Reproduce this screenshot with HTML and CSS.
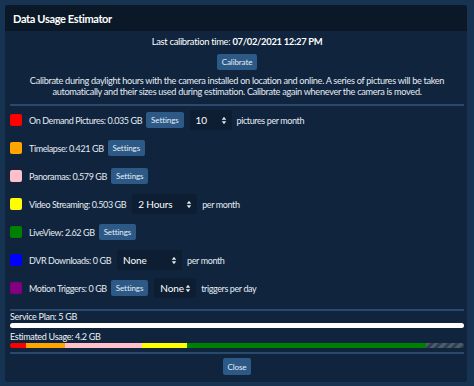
FILE: index.html
```html
<!DOCTYPE html>
<html>
<head>
  <meta charset="utf-8">
  <link rel="stylesheet" href="styles.css">
</head>
<body>
  <div class="modal">
    <div class="modal-header">Data Usage Estimator</div>

    <div class="modal-body">
      <div class="calibration">
        <div class="calibration-time">Last calibration time: <strong>07/02/2021 12:27 PM</strong></div>
        <button class="btn">Calibrate</button>
        <p class="calibration-help">Calibrate during daylight hours with the camera installed on location and online. A series of pictures will be taken automatically and their sizes used during estimation. Calibrate again whenever the camera is moved.</p>
      </div>

      <hr class="divider">

      <div class="usage-list">
        <div class="usage-row">
          <span class="swatch red"></span>
          <span class="label">On Demand Pictures: 0.035 GB</span>
          <button class="btn">Settings</button>
          <span class="select select-num">10<svg class="arrows" viewBox="0 0 8 12"><path d="M4 1 L7 5 H1 Z M4 11 L7 7 H1 Z"/></svg></span>
          <span class="unit">pictures per month</span>
        </div>
        <div class="usage-row">
          <span class="swatch orange"></span>
          <span class="label">Timelapse: 0.421 GB</span>
          <button class="btn">Settings</button>
        </div>
        <div class="usage-row">
          <span class="swatch pink"></span>
          <span class="label">Panoramas: 0.579 GB</span>
          <button class="btn">Settings</button>
        </div>
        <div class="usage-row">
          <span class="swatch yellow"></span>
          <span class="label">Video Streaming: 0.503 GB</span>
          <span class="select select-wide">2 Hours<svg class="arrows" viewBox="0 0 8 12"><path d="M4 1 L7 5 H1 Z M4 11 L7 7 H1 Z"/></svg></span>
          <span class="unit">per month</span>
        </div>
        <div class="usage-row">
          <span class="swatch green"></span>
          <span class="label">LiveView: 2.62 GB</span>
          <button class="btn">Settings</button>
        </div>
        <div class="usage-row">
          <span class="swatch blue"></span>
          <span class="label">DVR Downloads: 0 GB</span>
          <span class="select select-wide">None<svg class="arrows" viewBox="0 0 8 12"><path d="M4 1 L7 5 H1 Z M4 11 L7 7 H1 Z"/></svg></span>
          <span class="unit">per month</span>
        </div>
        <div class="usage-row">
          <span class="swatch purple"></span>
          <span class="label">Motion Triggers: 0 GB</span>
          <button class="btn">Settings</button>
          <span class="select select-num">None<svg class="arrows" viewBox="0 0 8 12"><path d="M4 1 L7 5 H1 Z M4 11 L7 7 H1 Z"/></svg></span>
          <span class="unit">triggers per day</span>
        </div>
      </div>

      <hr class="divider">

      <div class="meter">
        <div class="meter-label">Service Plan: 5 GB</div>
        <div class="bar bar-plan"></div>
        <div class="meter-label">Estimated Usage: 4.2 GB</div>
        <div class="bar bar-usage">
          <span class="seg red" style="width: 3.5%"></span>
          <span class="seg orange" style="width: 8.6%"></span>
          <span class="seg pink" style="width: 17%"></span>
          <span class="seg yellow" style="width: 9.9%"></span>
          <span class="seg green" style="width: 52.6%"></span>
          <span class="seg rest"></span>
        </div>
      </div>

      <hr class="divider divider-end">

      <div class="footer">
        <button class="btn btn-close">Close</button>
      </div>
    </div>
  </div>
</body>
</html>
```

FILE: styles.css
```css
body {
  margin: 0;
  padding: 5px 7px 4px 5px;
  background: #163352;
  font-family: Lato, 'Liberation Sans', sans-serif;
  color: #e8eef5;
}

.modal {
  background: #10243d;
  border-radius: 3px;
  overflow: hidden;
  height: 377px;
  display: flex;
  flex-direction: column;
}

.modal-header {
  background: #0b1828;
  height: 26px;
  padding-left: 8px;
  display: flex;
  align-items: center;
  font-size: 11px;
  font-weight: 700;
  letter-spacing: -0.35px;
  color: #fff;
}

.modal-body {
  padding: 4px 3px 0 5px;
}

.calibration {
  text-align: center;
}

.calibration-time {
  font-size: 9.4px;
  line-height: 14px;
  letter-spacing: -0.3px;
  color: #fff;
}

.calibration-time strong {
  font-weight: 700;
}

.calibration .btn {
  margin-top: 4px;
}

.calibration-help {
  margin: 5px 0 0;
  font-size: 9.2px;
  line-height: 11px;
  letter-spacing: -0.32px;
  color: #e4ebf3;
}

.btn {
  font-family: inherit;
  font-size: 8px;
  letter-spacing: -0.1px;
  color: #e6eef7;
  background: #2c5985;
  border: none;
  border-radius: 2px;
  height: 16px;
  padding: 0 5px;
  cursor: pointer;
}

.divider {
  border: none;
  border-top: 2px solid #2a4a6d;
  margin: 7px 0 0;
}

.usage-list {
  display: flex;
  flex-direction: column;
}

.usage-row {
  height: 28px;
  display: flex;
  align-items: center;
  gap: 4px;
  font-size: 9px;
  letter-spacing: -0.4px;
  color: #e4ebf3;
}

.swatch {
  width: 12px;
  height: 12px;
  border-radius: 2px;
  margin-right: 3px;
  flex-shrink: 0;
}

.label {
  white-space: nowrap;
}

.select {
  display: flex;
  align-items: center;
  justify-content: space-between;
  height: 20px;
  padding: 0 5px 0 6px;
  margin-left: 2px;
  background: #0d1e33;
  border-radius: 2px;
  font-size: 10px;
  letter-spacing: -0.1px;
  color: #fff;
  box-sizing: border-box;
}

.select-num {
  width: 42px;
}

.select-wide {
  width: 65px;
}

.arrows {
  width: 6px;
  height: 9px;
  fill: #dfe6ee;
}

.unit {
  margin-left: 1px;
}

.red { background: #f00; }
.orange { background: #ffa500; }
.pink { background: #ffc0cb; }
.yellow { background: #ff0; }
.green { background: #008000; }
.blue { background: #00f; }
.purple { background: #800080; }

.meter-label {
  font-size: 9px;
  line-height: 12px;
  letter-spacing: -0.3px;
  color: #eef3f8;
}

.bar {
  height: 5px;
  border-radius: 3px;
  margin-bottom: 3px;
}

.bar-plan {
  background: #fff;
}

.bar-usage {
  display: flex;
  overflow: hidden;
  margin-bottom: 0;
}

.seg {
  height: 100%;
}

.seg.rest {
  flex: 1;
  background: repeating-linear-gradient(135deg, #4c5a6a 0 3px, #2f3e50 3px 6px);
}

.divider-end {
  margin-top: 4px;
}

.footer {
  display: flex;
  justify-content: center;
  padding-top: 4px;
}

.btn-close {
  height: 17px;
}
```
